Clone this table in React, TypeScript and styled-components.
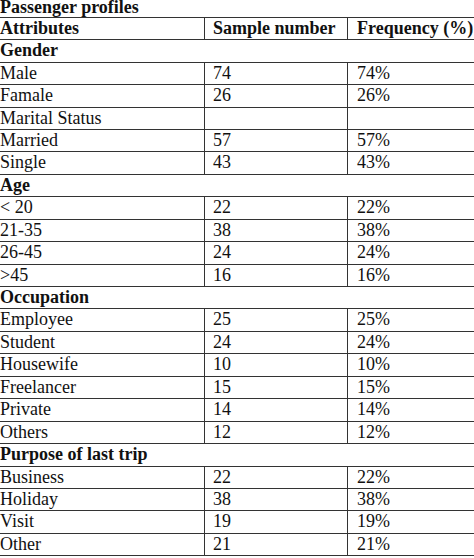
import React from "react";
import styled, { createGlobalStyle } from "styled-components";

const Global = createGlobalStyle`
  html, body {
    margin: 0;
    padding: 0;
    background: #ffffff;
    overflow: hidden;
  }
  body {
    font-family: "Liberation Serif", "Times New Roman", serif;
    color: #111111;
  }
`;

const Page = styled.div`
  width: 474px;
  height: 558px;
  overflow: hidden;
  background: #ffffff;
`;

const Title = styled.div`
  height: 17px;
  line-height: 15px;
  font-size: 18px;
  font-weight: 700;
  white-space: nowrap;
`;

const Table = styled.div`
  display: flex;
  flex-direction: column;
  width: 490px;
`;

const Row = styled.div<{ $header?: boolean }>`
  display: grid;
  grid-template-columns: 204px 143px 1fr;
  box-sizing: border-box;
  height: ${(p) => (p.$header ? "23.2px" : "22.45px")};
  border-top: ${(p) => (p.$header ? "1px solid #333333" : "none")};
  border-bottom: 1px solid #333333;
  font-size: 18px;
  line-height: 21.45px;
  font-weight: ${(p) => (p.$header ? 700 : 400)};
  white-space: nowrap;
`;

const SectionRow = styled.div`
  box-sizing: border-box;
  height: 22.45px;
  border-bottom: 1px solid #333333;
  font-size: 18px;
  line-height: 21.45px;
  font-weight: 700;
  white-space: nowrap;
`;

const Cell = styled.div<{ $col: 1 | 2 | 3 }>`
  padding-left: ${(p) => (p.$col === 1 ? "0px" : p.$col === 2 ? "8px" : "9px")};
  border-left: ${(p) => (p.$col === 1 ? "none" : "1px solid #333333")};
  overflow: visible;
`;

type Item =
  | { kind: "section"; label: string }
  | { kind: "row"; label: string; n: string; f: string };

const sec = (label: string): Item => ({ kind: "section", label });
const row = (label: string, n = "", f = ""): Item => ({ kind: "row", label, n, f });

const data: Item[] = [
  sec("Gender"),
  row("Male", "74", "74%"),
  row("Famale", "26", "26%"),
  row("Marital Status"),
  row("Married", "57", "57%"),
  row("Single", "43", "43%"),
  sec("Age"),
  row("< 20", "22", "22%"),
  row("21-35", "38", "38%"),
  row("26-45", "24", "24%"),
  row(">45", "16", "16%"),
  sec("Occupation"),
  row("Employee", "25", "25%"),
  row("Student", "24", "24%"),
  row("Housewife", "10", "10%"),
  row("Freelancer", "15", "15%"),
  row("Private", "14", "14%"),
  row("Others", "12", "12%"),
  sec("Purpose of last trip"),
  row("Business", "22", "22%"),
  row("Holiday", "38", "38%"),
  row("Visit", "19", "19%"),
  row("Other", "21", "21%"),
];

export default function App() {
  return (
    <Page>
      <Global />
      <Title>Passenger profiles</Title>
      <Table>
        <Row $header>
          <Cell $col={1}>Attributes</Cell>
          <Cell $col={2}>Sample number</Cell>
          <Cell $col={3}>Frequency (%)</Cell>
        </Row>
        {data.map((item, i) =>
          item.kind === "section" ? (
            <SectionRow key={i}>{item.label}</SectionRow>
          ) : (
            <Row key={i}>
              <Cell $col={1}>{item.label}</Cell>
              <Cell $col={2}>{item.n}</Cell>
              <Cell $col={3}>{item.f}</Cell>
            </Row>
          )
        )}
      </Table>
    </Page>
  );
}
